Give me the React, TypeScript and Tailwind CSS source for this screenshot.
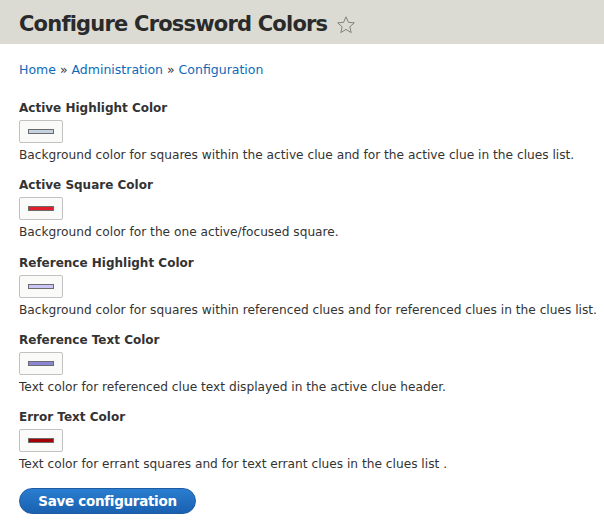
const fields = [
  {
    label: 'Active Highlight Color',
    swatch: 'bg-[#c5d3e0]',
    desc: 'Background color for squares within the active clue and for the active clue in the clues list.',
  },
  {
    label: 'Active Square Color',
    swatch: 'bg-[#e31c2b]',
    desc: 'Background color for the one active/focused square.',
  },
  {
    label: 'Reference Highlight Color',
    swatch: 'bg-[#c9c6f7]',
    desc: 'Background color for squares within referenced clues and for referenced clues in the clues list.',
  },
  {
    label: 'Reference Text Color',
    swatch: 'bg-[#8a85d4]',
    desc: 'Text color for referenced clue text displayed in the active clue header.',
  },
  {
    label: 'Error Text Color',
    swatch: 'bg-[#a50006]',
    desc: 'Text color for errant squares and for text errant clues in the clues list .',
  },
];

function Star() {
  return (
    <svg width="20" height="20" viewBox="0 0 24 24" className="ml-[9px] mt-[1px]">
      <path
        d="M12 2.2l2.9 6.6 7.1.6-5.4 4.7 1.6 7-6.2-3.8-6.2 3.8 1.6-7L2 9.4l7.1-.6z"
        fill="none"
        stroke="#7d7b6f"
        strokeWidth="1.1"
        strokeLinejoin="round"
      />
    </svg>
  );
}

export default function App() {
  return (
    <div className="min-h-[531px] bg-white font-['DejaVu_Sans',sans-serif] text-[#333]">
      <div className="flex h-[44px] items-center bg-[#dbdbd4] px-[19px] pt-[4px]">
        <h1 className="text-[21px] font-bold leading-none tracking-[-0.8px] text-[#2a2a2a]">
          Configure Crossword Colors
        </h1>
        <Star />
      </div>
      <div className="px-[19px]">
        <nav className="mt-[18px] text-[12.5px] leading-[16px]">
          <a className="text-[#0e6ab8]">Home</a>
          <span className="text-[#333]"> » </span>
          <a className="text-[#0e6ab8]">Administration</a>
          <span className="text-[#333]"> » </span>
          <a className="text-[#0e6ab8]">Configuration</a>
        </nav>
        <form className="mt-[22px] flex flex-col gap-[14.3px]">
          {fields.map((f) => (
            <div key={f.label} className="flex flex-col">
              <label className="text-[12px] font-bold leading-[16px]">{f.label}</label>
              <div className="mt-[4px] flex h-[23px] w-[44px] items-center justify-center rounded-[2px] border border-[#c2c2c2] bg-[#fafaf8]">
                <div className={`h-[5px] w-[26px] border border-[#6b6b6b] ${f.swatch}`} />
              </div>
              <p className="mt-[4px] whitespace-nowrap text-[12.2px] leading-[16px] text-[#333]">{f.desc}</p>
            </div>
          ))}
          <button
            type="button"
            className="mt-[2px] h-[26px] w-[177px] rounded-full border border-[#1d5ba3] bg-gradient-to-b from-[#2a7ed0] to-[#1a60b0] text-[13.5px] font-bold tracking-[-0.3px] text-white"
          >
            Save configuration
          </button>
        </form>
      </div>
    </div>
  );
}
